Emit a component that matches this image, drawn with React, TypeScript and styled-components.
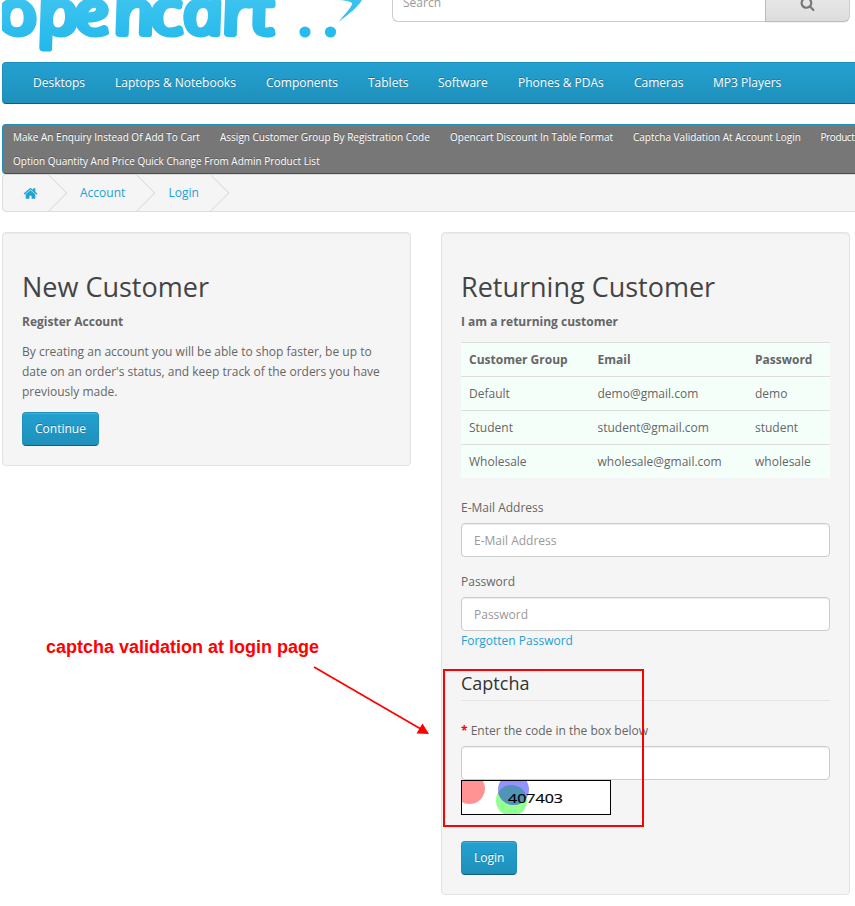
import React from "react";
import styled, { createGlobalStyle } from "styled-components";

const GlobalStyle = createGlobalStyle`
  *, *::before, *::after { box-sizing: border-box; }
  html, body { margin: 0; padding: 0; background: #fff; }
  body {
    font: 400 12px/20px "Open Sans", sans-serif;
    color: #666;
    overflow: hidden;
  }
`;

const Page = styled.div`
  position: relative;
  width: 855px;
  height: 906px;
  padding-left: 2px;
  overflow: hidden;
`;

const Header = styled.header`
  display: flex;
  height: 62px;
`;

const Logo = styled.svg`
  display: block;
  flex: none;
  width: 390px;
  height: 60px;
`;

const Search = styled.div`
  display: flex;
  width: 458px;
  height: 40px;
  margin-top: -18px;
`;

const SearchInput = styled.input`
  width: 373px;
  height: 40px;
  padding: 0 10px;
  border: 1px solid #ccc;
  border-right: 0;
  border-radius: 6px 0 0 6px;
  font: 400 12px "Open Sans", sans-serif;
  outline: none;
  box-shadow: inset 0 1px 1px rgba(0, 0, 0, 0.075);
  &::placeholder { color: #999; opacity: 1; }
`;

const SearchButton = styled.button`
  display: flex;
  align-items: center;
  justify-content: center;
  width: 85px;
  height: 40px;
  padding: 3px 1px 0 0;
  border: 1px solid #bbb;
  border-right-color: #ccc;
  border-radius: 0 6px 6px 0;
  background: linear-gradient(#eee, #ddd);
  color: #777;
  filter: drop-shadow(0 1px 0 #f4f4f4);
`;

const Icon = styled.svg`
  display: block;
  flex: none;
  width: 15px;
  height: 15px;
  fill: currentColor;
`;

const Nav = styled.nav`
  display: flex;
  align-items: center;
  width: 1140px;
  height: 42px;
  margin-bottom: 20px;
  padding-left: 15px;
  border: 1px solid #1f90bb;
  border-bottom-color: #145e7a;
  border-radius: 4px;
  background: linear-gradient(#23a1d1, #1f90bb);
`;

const NavLink = styled.a<{ $w: number }>`
  flex: none;
  width: ${(p) => p.$w}px;
  padding-left: 15px;
  color: #fff;
  white-space: nowrap;
  text-shadow: 0 -1px 0 rgba(0, 0, 0, 0.25);
`;

const ExtraMenu = styled.nav`
  width: 1140px;
  height: 50px;
  border: 1px solid #1f90bb;
  border-bottom-color: #145e7a;
  border-radius: 4px;
  background: #777;
`;

const ExtraRow = styled.div`
  display: flex;
  height: 24px;
`;

const ExtraLink = styled.a<{ $w: number }>`
  flex: none;
  width: ${(p) => p.$w}px;
  padding: 1px 0 0 10px;
  color: #fff;
  font-size: 10px;
  line-height: 22px;
  white-space: nowrap;
  text-shadow: 0 -1px 0 rgba(0, 0, 0, 0.25);
  &:nth-child(5) { letter-spacing: -0.4px; }
`;

const Crumbs = styled.div`
  display: flex;
  width: 1140px;
  height: 38px;
  margin-bottom: 20px;
  border: 1px solid #ddd;
  border-radius: 4px;
  background: #f5f5f5;
  overflow: hidden;
`;

const Crumb = styled.a<{ $w: number; $pad: number }>`
  position: relative;
  display: flex;
  align-items: center;
  width: ${(p) => p.$w}px;
  padding-left: ${(p) => p.$pad}px;
  color: #23a1d1;
  &::after {
    content: "";
    position: absolute;
    top: 5px;
    right: -0.5px;
    width: 26px;
    height: 26px;
    border-top: 1px solid #ddd;
    border-right: 1px solid #ddd;
    transform: rotate(45deg);
  }
`;

const Columns = styled.main`
  display: flex;
  align-items: flex-start;
  gap: 30px;
`;

const Well = styled.section`
  width: 409px;
  padding: 39px 19px 19px;
  border: 1px solid #e3e3e3;
  border-radius: 4px;
  background: #f5f5f5;
  box-shadow: inset 0 1px 1px rgba(0, 0, 0, 0.05);
`;

const Title = styled.h2`
  height: 30px;
  margin: 0 0 10px;
  color: #444;
  font-size: 27px;
  font-weight: 400;
  line-height: 30px;
`;

const Text = styled.p`
  margin: 0 0 10px;
`;

const Button = styled.button`
  display: block;
  height: 34px;
  padding: 0 12px;
  border: 1px solid #1f90bb;
  border-bottom-color: #145e7a;
  border-radius: 4px;
  background: linear-gradient(#23a1d1, #1f90bb);
  box-shadow: inset 0 1px 0 rgba(255, 255, 255, 0.15);
  color: #fff;
  font: 400 12px/20px "Open Sans", sans-serif;
  text-shadow: 0 -1px 0 rgba(0, 0, 0, 0.25);
`;

const Accounts = styled.table`
  width: 369px;
  margin-bottom: 20px;
  border-collapse: separate;
  border-spacing: 0;
  table-layout: fixed;
  background: #f5fffa;
  th, td {
    height: 34px;
    padding: 0 8px;
    border-top: 1px solid #ddd;
    text-align: left;
  }
  th:nth-child(1) { width: 128.5px; }
  th:nth-child(2) { width: 157.5px; }
`;

const Field = styled.div`
  margin-bottom: 15px;
`;

const Label = styled.label`
  display: block;
  margin-bottom: 5px;
  white-space: nowrap;
`;

const Required = styled.span`
  color: #f00;
  font-weight: 700;
`;

const Input = styled.input`
  display: block;
  width: 369px;
  height: 34px;
  padding: 0 12px;
  border: 1px solid #ccc;
  border-radius: 4px;
  background: #fff;
  box-shadow: inset 0 1px 1px rgba(0, 0, 0, 0.075);
  font: 400 12px "Open Sans", sans-serif;
  &::placeholder { color: #999; opacity: 1; }
`;

const Link = styled.a`
  display: block;
  color: #23a1d1;
`;

const Legend = styled.h3`
  height: 35px;
  margin: 0 0 20px;
  border-bottom: 1px solid #e5e5e5;
  color: #333;
  font-size: 18px;
  font-weight: 400;
  line-height: 34px;
`;

const CaptchaImage = styled.svg`
  display: block;
  width: 150px;
  height: 35px;
  margin-bottom: 26px;
`;

const Highlight = styled.div`
  position: absolute;
  left: 443px;
  top: 669px;
  width: 201px;
  height: 158px;
  border: 2px solid #f00;
`;

const Note = styled.div`
  position: absolute;
  left: 46px;
  top: 636px;
  color: #f00;
  font: 700 18px/22px "Liberation Sans", Arial, sans-serif;
  white-space: nowrap;
`;

const Arrow = styled.svg`
  position: absolute;
  left: 310px;
  top: 660px;
`;

const categories: [string, number][] = [
  ["Desktops", 82],
  ["Laptops & Notebooks", 151],
  ["Components", 102],
  ["Tablets", 70],
  ["Software", 80],
  ["Phones & PDAs", 116],
  ["Cameras", 79],
  ["MP3 Players", 100],
];

const extras: [string, number][][] = [
  [
    ["Make An Enquiry Instead Of Add To Cart", 207],
    ["Assign Customer Group By Registration Code", 230],
    ["Opencart Discount In Table Format", 183],
    ["Captcha Validation At Account Login", 187.5],
    ["Product", 80],
  ],
  [["Option Quantity And Price Quick Change From Admin Product List", 330]],
];

const accounts = [
  ["Default", "demo@gmail.com", "demo"],
  ["Student", "student@gmail.com", "student"],
  ["Wholesale", "wholesale@gmail.com", "wholesale"],
];

const HomeIcon = () => (
  <Icon viewBox="0 0 1792 1792">
    <path d="M1472 992v480q0 26-19 45t-45 19h-384v-384h-256v384h-384q-26 0-45-19t-19-45v-480q0-1 .5-3t.5-3l575-474 575 474q1 2 1 6zm223-69l-62 74q-8 9-21 11h-3q-13 0-21-7l-692-577-692 577q-12 8-24 7-13-2-21-11l-62-74q-8-10-7-23.500t11-21.500l719-599q32-26 76-26t76 26l244 204v-195q0-14 9-23t23-9h192q14 0 23 9t9 23v408l219 182q10 8 11 21.500t-7 23.500z" />
  </Icon>
);

const SearchIcon = () => (
  <Icon viewBox="0 0 1792 1792">
    <path d="M1216 832q0-185-131.500-316.500t-316.500-131.500-316.500 131.500-131.500 316.500 131.500 316.500 316.500 131.500 316.500-131.500 131.500-316.500zm512 832q0 52-38 90t-90 38q-54 0-90-38l-343-342q-179 124-399 124-143 0-273.500-55.500t-225-150-150-225-55.500-273.500 55.500-273.500 150-225 225-150 273.500-55.500 273.500 55.500 225 150 150 225 55.500 273.500q0 220-124 399l343 343q37 37 37 90z" />
  </Icon>
);

export default function App() {
  return (
    <Page>
      <GlobalStyle />
      <Header>
        <Logo viewBox="2 0 390 60" role="img" aria-label="opencart">
          <defs>
            <linearGradient id="sky" gradientUnits="userSpaceOnUse" x1="0" y1="-10" x2="0" y2="50">
              <stop offset="0" stopColor="#41c5ef" />
              <stop offset="1" stopColor="#22b9ec" />
            </linearGradient>
            <linearGradient id="word" gradientUnits="userSpaceOnUse" x1="0" y1="-44" x2="0" y2="16">
              <stop offset="0" stopColor="#41c5ef" />
              <stop offset="1" stopColor="#22b9ec" />
            </linearGradient>
          </defs>
          <text
            x="0.500 35.500 66.800 101 132.300 160.500 194.500 218.500"
            y="0"
            transform="translate(0 34) skewX(12) scale(1.16 1)"
            fontFamily="Open Sans, sans-serif"
            fontSize="61"
            fontWeight="400"
            fontStyle="italic"
            fill="url(#word)"
            stroke="url(#word)"
            strokeWidth="6"
            strokeLinejoin="round"
          >
            opencart
          </text>
          <circle cx="305" cy="32" r="5.600" fill="#28bbed" />
          <circle cx="330.500" cy="32" r="5.600" fill="#28bbed" />
          <path d="M340 0H362C358 7 349 14 338.500 22C344 15 351 8 352 4C352.500 1.500 347 1 340 0Z" fill="url(#sky)" />
        </Logo>
        <Search>
          <SearchInput placeholder="Search" />
          <SearchButton aria-label="Search">
            <SearchIcon />
          </SearchButton>
        </Search>
      </Header>
      <Nav>
        {categories.map(([name, w]) => (
          <NavLink key={name} $w={w}>{name}</NavLink>
        ))}
      </Nav>
      <ExtraMenu>
        {extras.map((row, i) => (
          <ExtraRow key={i}>
            {row.map(([name, w]) => (
              <ExtraLink key={name} $w={w}>{name}</ExtraLink>
            ))}
          </ExtraRow>
        ))}
      </ExtraMenu>
      <Crumbs>
        <Crumb $w={58} $pad={19.5}><HomeIcon /></Crumb>
        <Crumb $w={88} $pad={19}>Account</Crumb>
        <Crumb $w={74} $pad={19.5}>Login</Crumb>
      </Crumbs>
      <Columns>
        <Well>
          <Title>New Customer</Title>
          <Text><strong>Register Account</strong></Text>
          <Text>
            By creating an account you will be able to shop faster, be up to<br />
            date on an order's status, and keep track of the orders you have<br />
            previously made.
          </Text>
          <Button>Continue</Button>
        </Well>
        <Well>
          <Title>Returning Customer</Title>
          <Text><strong>I am a returning customer</strong></Text>
          <Accounts>
            <thead>
              <tr><th>Customer Group</th><th>Email</th><th>Password</th></tr>
            </thead>
            <tbody>
              {accounts.map((row) => (
                <tr key={row[0]}>{row.map((cell) => <td key={cell}>{cell}</td>)}</tr>
              ))}
            </tbody>
          </Accounts>
          <Field>
            <Label>E-Mail Address</Label>
            <Input placeholder="E-Mail Address" />
          </Field>
          <Field>
            <Label>Password</Label>
            <Input placeholder="Password" />
            <Link>Forgotten Password</Link>
          </Field>
          <Legend>Captcha</Legend>
          <Label><Required>*</Required> Enter the code in the box below</Label>
          <Input />
          <CaptchaImage viewBox="0 0 150 35">
            <rect width="150" height="35" fill="#fff" />
            <circle cx="8.500" cy="8.500" r="15.500" fill="#ff9393" />
            <circle cx="50.500" cy="20.500" r="15.500" fill="#93ff93" />
            <circle cx="52.500" cy="9.500" r="15.500" fill="#9393ff" />
            <clipPath id="lens"><circle cx="50.500" cy="20.500" r="15.500" /></clipPath>
            <circle cx="52.500" cy="9.500" r="15.500" fill="#5393b8" clipPath="url(#lens)" />
            <text x="47" y="22.500" fontFamily="Open Sans, sans-serif" fontSize="13" textLength="55" lengthAdjust="spacingAndGlyphs" fill="#000" stroke="#000" strokeWidth=".2">407403</text>
            <rect x=".5" y=".5" width="149" height="34" fill="none" stroke="#000" />
          </CaptchaImage>
          <Button>Login</Button>
        </Well>
      </Columns>
      <Highlight />
      <Note>captcha validation at login page</Note>
      <Arrow width="125" height="80" viewBox="310 660 125 80">
        <path d="M314 667L420 728.500" stroke="#f00" strokeWidth="1.700" />
        <path d="M429 734L416.500 733.500L422.500 723.500Z" fill="#f00" />
      </Arrow>
    </Page>
  );
}
